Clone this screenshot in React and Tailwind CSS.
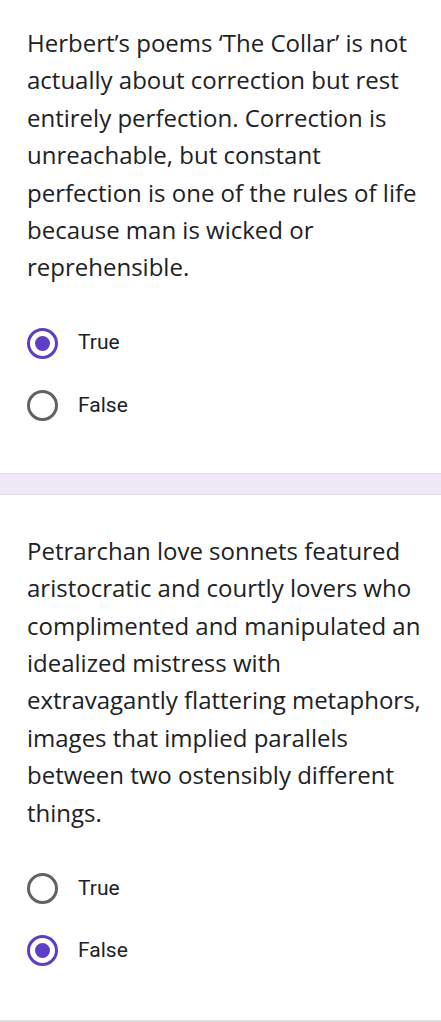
import React from "react";

function Radio({ checked, label }) {
  return (
    <div className="flex items-center h-[62.5px]">
      <div className="w-[78px] pl-[27px] flex items-center">
        {checked ? (
          <div className="w-[31px] h-[31px] rounded-full border-[3px] border-[#5f3dc4] flex items-center justify-center">
            <div className="w-[15px] h-[15px] rounded-full bg-[#5f3dc4]" />
          </div>
        ) : (
          <div className="w-[31px] h-[31px] rounded-full border-[3px] border-[#5f6368]" />
        )}
      </div>
      <span className="text-[21px] text-[#202124]" style={{ fontFamily: "Roboto, sans-serif" }}>{label}</span>
    </div>
  );
}

function Card({ lines, answer, mt, pb }) {
  return (
    <div className={`bg-white pt-[24px] ${pb}`}>
      <p
        className="px-[27px] text-[24px] leading-[37.4px] text-[#202124] whitespace-nowrap"
        style={{ fontFamily: "'Open Sans', sans-serif" }}
      >
        {lines.map((l, i) => (
          <span key={i} className="block">{l}</span>
        ))}
      </p>
      <div className={mt}>
        <Radio checked={answer === true} label="True" />
        <Radio checked={answer === false} label="False" />
      </div>
    </div>
  );
}

export default function App() {
  return (
    <div className="w-[441px] h-[1022px] bg-white overflow-hidden">
      <Card
        answer={true}
        mt="mt-[26px]"
        pb="pb-[36px]"
        lines={[
          "Herbert’s poems ‘The Collar’ is not",
          "actually about correction but rest",
          "entirely perfection. Correction is",
          "unreachable, but constant",
          "perfection is one of the rules of life",
          "because man is wicked or",
          "reprehensible.",
        ]}
      />
      <div className="h-[22px] bg-[#efe9f7] border-y border-[#dcdce4]" />
      <div className="pt-[13px]">
        <Card
          answer={false}
          mt="mt-[26px]"
          pb="pb-[38px]"
          lines={[
            "Petrarchan love sonnets featured",
            "aristocratic and courtly lovers who",
            "complimented and manipulated an",
            "idealized mistress with",
            "extravagantly flattering metaphors,",
            "images that implied parallels",
            "between two ostensibly different",
            "things.",
          ]}
        />
      </div>
      <div className="h-[2px] bg-[#e0e0e0]" />
    </div>
  );
}
